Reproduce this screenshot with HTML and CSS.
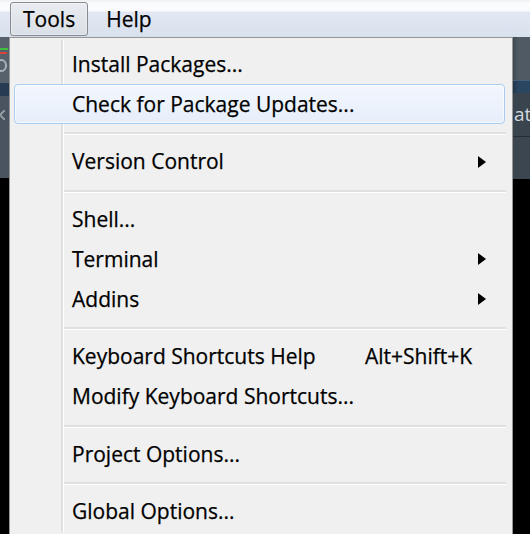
FILE: index.html
```html
<!DOCTYPE html>
<html>
<head>
<meta charset="utf-8">
<link rel="stylesheet" href="styles.css">
</head>
<body>
<div class="screen">
  <div class="menubar">
    <span class="mb-item mb-active">Tools</span>
    <span class="mb-item">Help</span>
  </div>
  <div class="workspace">
    <div class="strip strip-left">
      <div class="sl-top"><span class="mark-green"></span><span class="mark-red"></span><span class="mark-c"></span></div>
      <div class="sl-band"></div>
      <div class="sl-mid"><span class="mark-x"></span></div>
    </div>
    <div class="menu">
      <div class="menu-list">
        <div class="item">Install Packages...</div>
        <div class="item item-hl">Check for Package Updates...</div>
        <div class="sep"></div>
        <div class="item"><span>Version Control</span><svg class="arrow" viewBox="0 0 8 12"><path d="M0 0 L8 6 L0 12 Z"/></svg></div>
        <div class="sep"></div>
        <div class="item">Shell...</div>
        <div class="item"><span>Terminal</span><svg class="arrow" viewBox="0 0 8 12"><path d="M0 0 L8 6 L0 12 Z"/></svg></div>
        <div class="item"><span>Addins</span><svg class="arrow" viewBox="0 0 8 12"><path d="M0 0 L8 6 L0 12 Z"/></svg></div>
        <div class="sep"></div>
        <div class="item"><span class="label-fixed">Keyboard Shortcuts Help</span><span class="shortcut">Alt+Shift+K</span></div>
        <div class="item">Modify Keyboard Shortcuts...</div>
        <div class="sep"></div>
        <div class="item">Project Options...</div>
        <div class="sep"></div>
        <div class="item">Global Options...</div>
      </div>
    </div>
    <div class="strip strip-right">
      <div class="sr-top"></div>
      <div class="sr-band"></div>
      <div class="sr-text"><span>at</span></div>
      <div class="sr-low"></div>
    </div>
  </div>
</div>
</body>
</html>
```
FILE: styles.css
```css
html, body {
  margin: 0;
  padding: 0;
  background: #000;
}
.screen {
  width: 530px;
  height: 534px;
  overflow: hidden;
  display: flex;
  flex-direction: column;
  font-family: "Open Sans", "Noto Sans", sans-serif;
  font-size: 21px;
  color: #000;
  -webkit-text-stroke: 0.25px #000;
}
.menubar {
  height: 37px;
  flex: none;
  box-sizing: border-box;
  display: flex;
  align-items: flex-start;
  padding: 2px 0 0 10px;
  gap: 5px;
  background: linear-gradient(to bottom, #eeeff2 0, #fbfcfd 3px, #fbfbfd 11px, #e2e8f3 12px, #d9e1ee 100%);
}
.mb-item {
  height: 34px;
  box-sizing: border-box;
  border: 1px solid transparent;
  border-radius: 3px;
  padding: 0 12px;
  display: flex;
  align-items: center;
  line-height: 1;
}
.mb-active {
  border-color: #878b90;
  background: linear-gradient(to bottom, #e9ecf0, #dadfe7);
  box-shadow: inset 0 0 0 1px rgba(255,255,255,0.35);
}
.workspace {
  flex: 1;
  display: flex;
  min-height: 0;
}
.strip {
  display: flex;
  flex-direction: column;
  overflow: hidden;
}
.strip-left { width: 9px; flex: none; }
.strip-right { width: 17px; flex: none; }
.sl-top {
  height: 46px;
  background: #56616c;
  position: relative;
}
.mark-green {
  position: absolute; left: 0; top: 11px; width: 8px; height: 2px; background: #3fbf3f;
}
.mark-red {
  position: absolute; left: 0; top: 15px; width: 7px; height: 2px; background: #d9433a;
}
.mark-c {
  position: absolute; left: -4px; top: 22px; width: 7px; height: 9px;
  border: 2px solid #aab2ba; border-radius: 50%;
}
.sl-band { height: 13px; background: #273c52; }
.sl-mid {
  height: 82px;
  background: #4a5460;
  position: relative;
}
.mark-x {
  position: absolute; left: -5px; top: 14px;
  width: 10px; height: 10px;
  background:
    linear-gradient(45deg, transparent 43%, #8e969e 43%, #8e969e 57%, transparent 57%),
    linear-gradient(-45deg, transparent 43%, #8e969e 43%, #8e969e 57%, transparent 57%);
}
.sr-top {
  height: 43px;
  background: linear-gradient(to right, #3f4852 0, #4f5a65 5px);
}
.sr-band {
  height: 12px;
  background: linear-gradient(to right, #223548 0, #2b4661 5px);
  border-top: 1px solid #45607c;
}
.sr-text {
  height: 43px;
  background: #3a444f;
  border-bottom: 1px solid #262c33;
  display: flex;
  align-items: center;
  overflow: hidden;
}
.sr-text span {
  color: #d3d8dd;
  -webkit-text-stroke: 0;
  font-size: 19px;
  margin-left: 1px;
  line-height: 1;
}
.sr-low { height: 42px; background: #3c4650; }
.menu {
  width: 504px;
  flex: none;
  box-sizing: border-box;
  height: 500px;
  border: 1px solid #979797;
  background: #f0f0f0;
  padding: 2px 7px 0 4px;
  box-shadow: 3px 3px 4px rgba(0,0,0,0.45);
}
.menu-list {
  padding-top: 4px;
  background: linear-gradient(to right, transparent 47px, #e0e0e0 47px, #e0e0e0 49px, #ffffff 49px, #ffffff 50px, transparent 50px);
}
.item {
  height: 40px;
  box-sizing: border-box;
  border: 1px solid transparent;
  border-radius: 4px;
  padding: 0 18px 0 57px;
  display: flex;
  align-items: center;
  white-space: nowrap;
  line-height: 1;
}
.item-hl {
  border-color: #a9ccf1;
  background: linear-gradient(to bottom, #f3f7fd, #e5eefa);
  box-shadow: inset 0 0 0 1px rgba(255,255,255,0.6);
}
.arrow {
  margin-left: auto;
  width: 8px;
  height: 12px;
  fill: #000;
}
.label-fixed {
  width: 293px;
  flex: none;
}
.sep {
  height: 17.6px;
  margin-left: 50px;
  margin-right: -1px;
  background: linear-gradient(to bottom, transparent 8.5px, #e0e0e0 8.5px, #e0e0e0 10.5px, #ffffff 10.5px, #ffffff 11.5px, transparent 11.5px);
}
```
